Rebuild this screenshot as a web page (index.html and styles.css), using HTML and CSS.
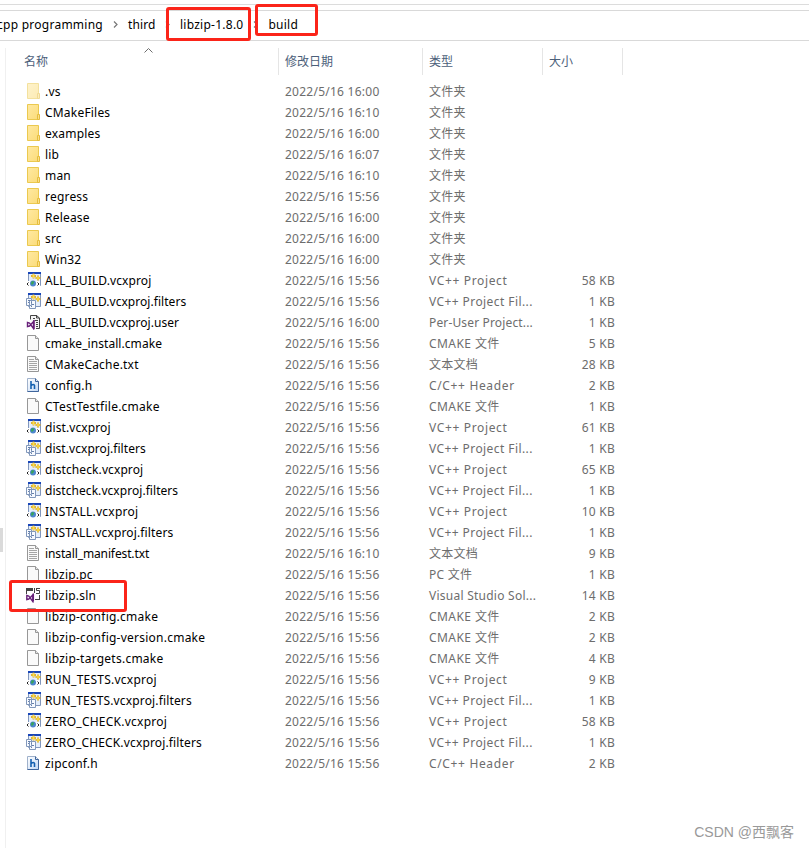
FILE: index.html
```html
<!DOCTYPE html>
<html lang="zh-CN">

<head>
  <meta charset="UTF-8">
  <meta name="viewport" content="width=device-width, initial-scale=1.0">
  <title>build</title>
  <link rel="stylesheet" href="styles.css">
</head>

<body>
  <svg class="sprites" width="0" height="0">
    <defs>
      <linearGradient id="fold" x1="0" y1="0" x2="1" y2="1">
        <stop offset="0" stop-color="#ffe9a2" />
        <stop offset="1" stop-color="#fbdc79" />
      </linearGradient>
      <linearGradient id="blue" x1="0" y1="0" x2="1" y2="1">
        <stop offset="0" stop-color="#ffffff" />
        <stop offset="1" stop-color="#c3d9f5" />
      </linearGradient>
      <symbol id="i-folder" viewBox="0 0 16 16">
        <path d="M1.5.5h11v15h-11z" fill="url(#fold)" stroke="#ebc94f" />
        <path d="M11.5 15.5v-5h2v5z" fill="#fbe08a" stroke="#e5bd3f" />
      </symbol>
      <symbol id="i-file" viewBox="0 0 16 16">
        <path d="M1.5.5h8l3 3v12h-11z" fill="#fafafa" stroke="#979797" />
        <path d="M9.5.5v3h3" fill="#e6e6e6" stroke="#979797" />
      </symbol>
      <symbol id="i-text" viewBox="0 0 16 16">
        <use href="#i-file" />
        <path d="M3 3.5h5M3 5.5h8M3 7.5h8M3 9.5h8M3 11.5h8M3 13.5h8" stroke="#a5a5a5" />
      </symbol>
      <symbol id="i-header" viewBox="0 0 16 16">
        <path d="M1.5 1.5h8l3 3v10h-11z" fill="url(#blue)" stroke="#9fb1cb" />
        <path d="M9.5 1.5v3h3v10h-11" fill="none" stroke="#3f659c" />
        <path d="M5 4v8M5 8.500q3-2 3.500 0v3.500" fill="none" stroke="#1460b0" stroke-width="1.600" />
      </symbol>
      <symbol id="i-window" viewBox="0 0 16 16">
        <path d="M2.5.5h12v13h-12z" fill="#e4eefb" stroke="#8196bd" />
        <path d="M2 0h13v2H2z" fill="#1745b8" />
        <path d="M7.500 1.500v5M5 4h5M12 3.500v5M9.500 6h5" stroke="#d3a42c" stroke-width="1.800" />
        <path d="M7.500 2v4M5.500 4h4M12 4v4M10 6h4" stroke="#ffe04a" />
      </symbol>
      <symbol id="i-proj" viewBox="0 0 16 16">
        <use href="#i-window" />
        <path d="M0 9h14v5H0z" fill="#fff" />
        <circle cx="7" cy="11.500" r="3" fill="#4f86cf" />
        <path d="M5.500 9.500l2-.5.5 2-2 2-1-1z" fill="#3aa557" />
        <path d="M2.500 10.500L1 12l1.500 1.500M11.500 10.500L13 12l-1.500 1.500" fill="none" stroke="#222" />
      </symbol>
      <symbol id="i-filters" viewBox="0 0 16 16">
        <use href="#i-window" />
        <path d="M.5 5.5h5v7h-5zM3.500 7.500h6v8h-6z" fill="#f7faff" stroke="#8298bb" />
        <path d="M2 7.500h2M2 9.500h1M5 9.500h1M6 11.500h2M5 13.500h1" stroke="#6680aa" />
      </symbol>
      <symbol id="i-user" viewBox="0 0 16 16">
        <path d="M4.500 5.500v-4h6l3 2.500v10.500H10" fill="#f5f5f5" stroke="#444" />
        <path d="M10.500 1v3h3M7 4.500h2M9 6.500h3M10 8.500h2M10 10.500h2M10 12.500h2" fill="none" stroke="#444" />
        <path d="M1.500 8.500v4l2-.5 4-4.500v7L3.500 9z" fill="none" stroke="#68217a" stroke-width="1.400" />
        <path d="M8 6v9" stroke="#68217a" stroke-width="1.500" />
      </symbol>
      <symbol id="i-sln" viewBox="0 0 16 16">
        <path d="M0 1h7v3H0zM0 4h1v3H0z" fill="#424242" />
        <path d="M8.500 1v5M10 1.500h4M10.500 1v2.500h3v3H10M9 12.500h5M13.500 8v4" fill="none" stroke="#424242" />
        <path d="M.8 8.500v4l2-.5 4-4v6.500l-4-5.500z" fill="none" stroke="#68217a" stroke-width="1.400" />
        <path d="M7.300 6.500v8" stroke="#68217a" stroke-width="1.500" />
      </symbol>
    </defs>
  </svg>

  <div class="explorer">
    <div class="tabline"></div>
    <nav class="address">
      <span class="crumb first">cpp programming</span>
      <svg class="sep" viewBox="0 0 5 7"><path d="M1 .5l3 3-3 3" /></svg>
      <span class="crumb third">third</span>
      <svg class="sep" viewBox="0 0 5 7"><path d="M1 .5l3 3-3 3" /></svg>
      <span class="crumb marked">libzip-1.8.0<i class="mark mark-version"></i></span>
      <svg class="sep" viewBox="0 0 5 7"><path d="M1 .5l3 3-3 3" /></svg>
      <span class="crumb marked">build<i class="mark mark-build"></i></span>
    </nav>

    <main class="pane">
      <i class="scroll-thumb"></i>
      <div class="head">
        <span>名称<svg class="sort" viewBox="0 0 9 5"><path d="M.5 4.500l4-4 4 4" /></svg></span>
        <span>修改日期</span>
        <span>类型</span>
        <span>大小</span>
      </div>

      <div class="row faded"><svg><use href="#i-folder" /></svg><b>.vs</b><span>2022/5/16 16:00</span><span>文件夹</span><em></em></div>
      <div class="row"><svg><use href="#i-folder" /></svg><b>CMakeFiles</b><span>2022/5/16 16:10</span><span>文件夹</span><em></em></div>
      <div class="row"><svg><use href="#i-folder" /></svg><b>examples</b><span>2022/5/16 16:00</span><span>文件夹</span><em></em></div>
      <div class="row"><svg><use href="#i-folder" /></svg><b>lib</b><span>2022/5/16 16:07</span><span>文件夹</span><em></em></div>
      <div class="row"><svg><use href="#i-folder" /></svg><b>man</b><span>2022/5/16 16:10</span><span>文件夹</span><em></em></div>
      <div class="row"><svg><use href="#i-folder" /></svg><b>regress</b><span>2022/5/16 15:56</span><span>文件夹</span><em></em></div>
      <div class="row"><svg><use href="#i-folder" /></svg><b>Release</b><span>2022/5/16 16:00</span><span>文件夹</span><em></em></div>
      <div class="row"><svg><use href="#i-folder" /></svg><b>src</b><span>2022/5/16 16:00</span><span>文件夹</span><em></em></div>
      <div class="row"><svg><use href="#i-folder" /></svg><b>Win32</b><span>2022/5/16 16:00</span><span>文件夹</span><em></em></div>
      <div class="row vc"><svg><use href="#i-proj" /></svg><b>ALL_BUILD.vcxproj</b><span>2022/5/16 15:56</span><span>VC++ Project</span><em>58 KB</em></div>
      <div class="row filters"><svg><use href="#i-filters" /></svg><b>ALL_BUILD.vcxproj.filters</b><span>2022/5/16 15:56</span><span>VC++ Project Fil...</span><em>1 KB</em></div>
      <div class="row user"><svg><use href="#i-user" /></svg><b>ALL_BUILD.vcxproj.user</b><span>2022/5/16 16:00</span><span>Per-User Project...</span><em>1 KB</em></div>
      <div class="row cmake"><svg><use href="#i-file" /></svg><b>cmake_install.cmake</b><span>2022/5/16 15:56</span><span>CMAKE 文件</span><em>5 KB</em></div>
      <div class="row"><svg><use href="#i-text" /></svg><b>CMakeCache.txt</b><span>2022/5/16 15:56</span><span>文本文档</span><em>28 KB</em></div>
      <div class="row hdr"><svg><use href="#i-header" /></svg><b>config.h</b><span>2022/5/16 15:56</span><span>C/C++ Header</span><em>2 KB</em></div>
      <div class="row cmake"><svg><use href="#i-file" /></svg><b class="wide">CTestTestfile.cmake</b><span>2022/5/16 15:56</span><span>CMAKE 文件</span><em>1 KB</em></div>
      <div class="row vc"><svg><use href="#i-proj" /></svg><b>dist.vcxproj</b><span>2022/5/16 15:56</span><span>VC++ Project</span><em>61 KB</em></div>
      <div class="row filters"><svg><use href="#i-filters" /></svg><b>dist.vcxproj.filters</b><span>2022/5/16 15:56</span><span>VC++ Project Fil...</span><em>1 KB</em></div>
      <div class="row vc"><svg><use href="#i-proj" /></svg><b>distcheck.vcxproj</b><span>2022/5/16 15:56</span><span>VC++ Project</span><em>65 KB</em></div>
      <div class="row filters"><svg><use href="#i-filters" /></svg><b>distcheck.vcxproj.filters</b><span>2022/5/16 15:56</span><span>VC++ Project Fil...</span><em>1 KB</em></div>
      <div class="row vc"><svg><use href="#i-proj" /></svg><b class="caps">INSTALL.vcxproj</b><span>2022/5/16 15:56</span><span>VC++ Project</span><em>10 KB</em></div>
      <div class="row filters"><svg><use href="#i-filters" /></svg><b class="caps-filters">INSTALL.vcxproj.filters</b><span>2022/5/16 15:56</span><span>VC++ Project Fil...</span><em>1 KB</em></div>
      <div class="row"><svg><use href="#i-text" /></svg><b class="tight">install_manifest.txt</b><span>2022/5/16 16:10</span><span>文本文档</span><em>9 KB</em></div>
      <div class="row"><svg><use href="#i-file" /></svg><b>libzip.pc</b><span>2022/5/16 15:56</span><span>PC 文件</span><em>1 KB</em></div>
      <div class="row marked"><svg><use href="#i-sln" /></svg><b>libzip.sln</b><span>2022/5/16 15:56</span><span>Visual Studio Sol...</span><em>14 KB</em><i class="mark mark-sln"></i></div>
      <div class="row cmake"><svg><use href="#i-file" /></svg><b class="wide">libzip-config.cmake</b><span>2022/5/16 15:56</span><span>CMAKE 文件</span><em>2 KB</em></div>
      <div class="row cmake"><svg><use href="#i-file" /></svg><b class="wide">libzip-config-version.cmake</b><span>2022/5/16 15:56</span><span>CMAKE 文件</span><em>2 KB</em></div>
      <div class="row cmake"><svg><use href="#i-file" /></svg><b class="wide">libzip-targets.cmake</b><span>2022/5/16 15:56</span><span>CMAKE 文件</span><em>4 KB</em></div>
      <div class="row vc"><svg><use href="#i-proj" /></svg><b class="caps">RUN_TESTS.vcxproj</b><span>2022/5/16 15:56</span><span>VC++ Project</span><em>9 KB</em></div>
      <div class="row filters"><svg><use href="#i-filters" /></svg><b class="caps-filters">RUN_TESTS.vcxproj.filters</b><span>2022/5/16 15:56</span><span>VC++ Project Fil...</span><em>1 KB</em></div>
      <div class="row vc"><svg><use href="#i-proj" /></svg><b class="caps">ZERO_CHECK.vcxproj</b><span>2022/5/16 15:56</span><span>VC++ Project</span><em>58 KB</em></div>
      <div class="row filters"><svg><use href="#i-filters" /></svg><b class="caps-filters">ZERO_CHECK.vcxproj.filters</b><span>2022/5/16 15:56</span><span>VC++ Project Fil...</span><em>1 KB</em></div>
      <div class="row hdr"><svg><use href="#i-header" /></svg><b>zipconf.h</b><span>2022/5/16 15:56</span><span>C/C++ Header</span><em>2 KB</em></div>
    </main>

    <div class="watermark">CSDN @西飘客</div>
  </div>
</body>

</html>
```

FILE: styles.css
```css
* {
  box-sizing: border-box;
}

body {
  margin: 0;
  background: #fff;
  font-family: "Noto Sans", "Noto Sans CJK SC", sans-serif;
  font-size: 12px;
  letter-spacing: 0.25px;
  color: #000;
}

.sprites {
  position: absolute;
}

.explorer {
  position: relative;
  height: 848px;
  overflow: hidden;
  display: flex;
  flex-direction: column;
}

.tabline {
  height: 7px;
  margin-top: 4px;
  border-top: 1px solid #dcdcdc;
  border-bottom: 1px solid #d9d9d9;
}

/* address bar */
.address {
  height: 30px;
  display: flex;
  align-items: center;
  padding-bottom: 3px;
  border-bottom: 1px solid #d9d9d9;
}

.crumb {
  white-space: nowrap;
}

.crumb.first {
  width: 103px;
  display: flex;
  justify-content: flex-end;
}

.crumb.third {
  width: 27px;
  letter-spacing: 0.1px;
}

.sep {
  width: 5px;
  height: 7px;
  margin: 0 10px;
  fill: none;
  stroke: #777;
  stroke-width: 1.2;
}

.marked {
  position: relative;
}

.mark {
  position: absolute;
  border: 3px solid #fb2419;
  border-radius: 3px;
}

.mark-version {
  left: -14px;
  top: -9px;
  width: 85px;
  height: 34px;
}

.mark-build {
  left: -13px;
  top: -12px;
  width: 63px;
  height: 32px;
}

.mark-sln {
  left: 3px;
  top: -5px;
  width: 118px;
  height: 32px;
}

/* file list */
.pane {
  position: relative;
  flex: 1;
  margin: 7px 0 0 5px;
  border-left: 1px solid #f0f0f0;
}

.scroll-thumb {
  position: absolute;
  left: -6px;
  top: 480px;
  width: 3px;
  height: 24px;
  background: #dadada;
}

.head {
  display: grid;
  grid-template-columns: 273px 144px 120px 80px;
  height: 27px;
  margin-bottom: 6px;
  color: #4c607a;
  letter-spacing: 0;
}

.head span {
  position: relative;
  padding-left: 6px;
  line-height: 27px;
  border-right: 1px solid #e5e5e5;
}

.head span:first-child {
  padding-left: 18px;
}

.sort {
  position: absolute;
  left: 138px;
  top: 0;
  width: 9px;
  height: 5px;
  fill: none;
  stroke: #6d6d6d;
}

.row {
  display: grid;
  grid-template-columns: 19px 240px 144px 120px 66px;
  height: 21px;
  padding-left: 20px;
  line-height: 21px;
  color: #6d6d6d;
  white-space: nowrap;
}

.row svg {
  width: 16px;
  height: 16px;
  margin-top: 2px;
}

.faded svg {
  opacity: 0.55;
}

.row b {
  font-weight: normal;
  color: #000;
  letter-spacing: 0.2px;
}

.vc b {
  letter-spacing: 0.1px;
}

.filters b {
  letter-spacing: 0.05px;
}

.user b,
.cmake b {
  letter-spacing: 0.06px;
}

.row b.caps,
.row b.wide {
  letter-spacing: 0.24px;
}

.row b.caps-filters {
  letter-spacing: 0.15px;
}

.row b.tight {
  letter-spacing: -0.12px;
}

/* type column */
.vc span:nth-child(4),
.hdr span:nth-child(4) {
  letter-spacing: 0.65px;
}

.filters span:nth-child(4),
.cmake span:nth-child(4) {
  letter-spacing: 0.42px;
}

.user span:nth-child(4) {
  letter-spacing: 0.15px;
}

.row em {
  font-style: normal;
  text-align: right;
}

.watermark {
  position: absolute;
  right: 15px;
  bottom: 6px;
  font-family: "Liberation Sans", "Noto Sans CJK SC", sans-serif;
  font-size: 14px;
  line-height: 20px;
  letter-spacing: 0;
  color: #999;
}
```
